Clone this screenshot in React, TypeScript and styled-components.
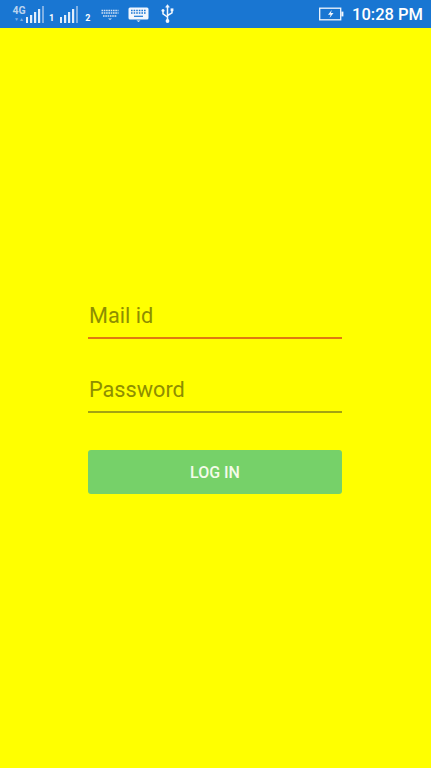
import styled, { createGlobalStyle } from 'styled-components';

const GlobalStyle = createGlobalStyle`
  html, body {
    margin: 0;
    padding: 0;
    background: #ffff00;
    font-family: Roboto, "Liberation Sans", sans-serif;
  }
`;

const Screen = styled.div`
  width: 431px;
  height: 768px;
  display: flex;
  flex-direction: column;
  background: #ffff00;
  overflow: hidden;
`;

const StatusBar = styled.div`
  height: 28px;
  background: #1976d2;
  display: flex;
  align-items: center;
  justify-content: space-between;
  padding: 0 8px 0 12px;
  color: #fff;
  flex-shrink: 0;
`;

const StatusGroup = styled.div`
  display: flex;
  align-items: center;
`;

const NetworkType = styled.div`
  display: flex;
  flex-direction: column;
  align-items: center;
  width: 14px;
  color: #b9d3ee;
`;

const NetworkLabel = styled.span`
  font-size: 10.5px;
  line-height: 10px;
  font-weight: 700;
`;

const NetworkArrows = styled.span`
  font-size: 5px;
  line-height: 6px;
  color: #7fb0e4;
`;

const SimNumber = styled.span`
  font-size: 9px;
  font-weight: 700;
  line-height: 8px;
  align-self: flex-end;
  margin: 0 6px 0 3px;
  padding-bottom: 2px;
`;

const SecondSim = styled(SimNumber)`
  margin-left: 5px;
`;

const IconSlot = styled.div<{ $gap: number }>`
  display: flex;
  margin-left: ${(props) => props.$gap}px;
`;

const Clock = styled.span`
  font-size: 16.5px;
  font-weight: 500;
  margin-left: 8px;
`;

const Content = styled.main`
  flex: 1;
  display: flex;
  flex-direction: column;
  padding: 270px 89px 0 88px;
`;

const Field = styled.div<{ $line: string; $gap: number }>`
  height: 35px;
  padding: 0 0 4px 1px;
  margin-bottom: ${(props) => props.$gap}px;
  border-bottom: 2px solid ${(props) => props.$line};
  display: flex;
  align-items: center;
  color: #8e8e00;
  font-size: 21.7px;
`;

const LoginButton = styled.button`
  height: 44px;
  border: none;
  border-radius: 3px;
  background: #76d169;
  color: #f4fbe9;
  font-family: inherit;
  font-size: 16px;
  font-weight: 500;
  padding: 0;
`;

function Signal() {
  return (
    <svg width="20" height="20" viewBox="0 0 20 20" fill="#e3eefa">
      <rect x="0" y="13" width="2" height="6" />
      <rect x="4" y="11" width="2.2" height="8" />
      <rect x="8" y="8" width="2.2" height="11" />
      <rect x="12" y="5" width="2.2" height="14" />
      <rect x="16" y="2" width="2" height="17" fill="#7fb0e4" />
    </svg>
  );
}

function Keyboard({ solid }: { solid: boolean }) {
  if (solid) {
    return (
      <svg width="21" height="15" viewBox="0 0 21 15">
        <rect x="0.5" y="0.5" width="20" height="12" rx="1.5" fill="#f2f7fd" />
        <path d="M3 3.5h15M3 6h15" stroke="#1976d2" strokeWidth="1.4" strokeDasharray="1.6 1" />
        <path d="M6 9.3h9" stroke="#1976d2" strokeWidth="1.2" />
        <path d="M8.5 13.5h4l-2 1.5z" fill="#f2f7fd" />
      </svg>
    );
  }
  return (
    <svg width="18" height="13" viewBox="0 0 18 13">
      <path d="M0.5 2.5h17M0.5 5h17" stroke="#cfe0f5" strokeWidth="1.6" strokeDasharray="1.6 0.7" />
      <path d="M2 8h14" stroke="#cfe0f5" strokeWidth="1.6" strokeDasharray="1.6 0.7" />
      <path d="M7 10.5h4l-2 1.5z" fill="#cfe0f5" />
    </svg>
  );
}

function Usb() {
  return (
    <svg width="13" height="20" viewBox="0 0 13 20" fill="none" stroke="#f2f7fd" strokeWidth="1.5">
      <path d="M6.5 2.5V16" />
      <path d="M4.6 3.2 6.5 0.6l1.9 2.6z" fill="#f2f7fd" strokeWidth="0.5" />
      <circle cx="6.5" cy="17" r="1.9" fill="#f2f7fd" stroke="none" />
      <path d="M6.5 13 2 9.8V7.5" />
      <path d="M6.5 11.5 11 8.8V6.8" />
      <circle cx="2" cy="6.5" r="1.5" fill="#f2f7fd" stroke="none" />
      <rect x="9.6" y="4.4" width="2.8" height="2.8" fill="#f2f7fd" stroke="none" />
    </svg>
  );
}

function Battery() {
  return (
    <svg width="25" height="14" viewBox="0 0 25 14" fill="none">
      <rect x="0.7" y="1.2" width="21" height="11.6" stroke="#f2f7fd" strokeWidth="1.3" />
      <rect x="22.4" y="4.6" width="2" height="4.8" fill="#f2f7fd" />
      <path d="M12.8 3 9 7.8h2.6L10.6 11l3.9-4.9h-2.6z" fill="#f2f7fd" />
    </svg>
  );
}

export default function App() {
  return (
    <Screen>
      <GlobalStyle />
      <StatusBar>
        <StatusGroup>
          <NetworkType>
            <NetworkLabel>4G</NetworkLabel>
            <NetworkArrows>▼▲</NetworkArrows>
          </NetworkType>
          <Signal />
          <SimNumber>1</SimNumber>
          <Signal />
          <SecondSim>2</SecondSim>
          <IconSlot $gap={5}>
            <Keyboard solid={false} />
          </IconSlot>
          <IconSlot $gap={9}>
            <Keyboard solid />
          </IconSlot>
          <IconSlot $gap={12}>
            <Usb />
          </IconSlot>
        </StatusGroup>
        <StatusGroup>
          <Battery />
          <Clock>10:28 PM</Clock>
        </StatusGroup>
      </StatusBar>
      <Content>
        <Field $line="#e07a10" $gap={33}>Mail id</Field>
        <Field $line="#a3a312" $gap={37}>Password</Field>
        <LoginButton>LOG IN</LoginButton>
      </Content>
    </Screen>
  );
}
